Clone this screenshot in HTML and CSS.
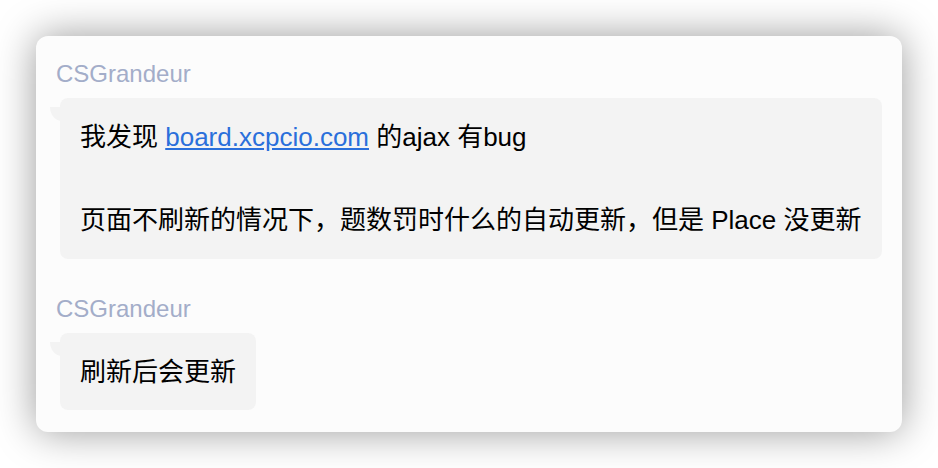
FILE: index.html
```html
<!DOCTYPE html>
<html lang="zh-CN">
  <head>
    <meta charset="utf-8" />
    <meta name="viewport" content="width=device-width, initial-scale=1.0" />
    <title>Chat</title>
    <link rel="stylesheet" href="styles.css">
  </head>
  <body>
    <div class="chat-card">
      <div class="msg">
        <div class="msg-name">CSGrandeur</div>
        <div class="bubble">
          <p>我发现 <a href="#">board.xcpcio.com</a> 的ajax 有bug</p>
          <p>页面不刷新的情况下，题数罚时什么的自动更新，但是 Place 没更新</p>
        </div>
      </div>
      <div class="msg">
        <div class="msg-name">CSGrandeur</div>
        <div class="bubble">
          <p>刷新后会更新</p>
        </div>
      </div>
    </div>
  </body>
</html>
```

FILE: styles.css
```css
:root {
  --card-bg: #fcfcfc;
  --bubble-bg: #f3f3f3;
  --name-color: #a3adc9;
  --link-color: #2a6fdb;
}

* {
  box-sizing: border-box;
}

body {
  margin: 0;
  background-color: #ffffff;
  font-family: "Liberation Sans", Arial, "Noto Sans CJK SC", sans-serif;
  color: #000000;
}

.chat-card {
  margin: 36px;
  padding: 22px 20px 22px;
  background-color: var(--card-bg);
  border-radius: 12px;
  box-shadow: 0 0 40px rgba(0, 0, 0, 0.4);
}

.msg + .msg {
  margin-top: 34px;
}

.msg-name {
  font-size: 24px;
  line-height: 32px;
  color: var(--name-color);
  margin-bottom: 8px;
}

.bubble {
  position: relative;
  width: fit-content;
  margin-left: 4px;
  padding: 19px 20px 17px;
  background-color: var(--bubble-bg);
  border-radius: 8px;
  font-size: 26px;
  line-height: 1.6;
}

/* little tail on the top left */
.bubble::before {
  content: "";
  position: absolute;
  left: -10px;
  top: 9px;
  width: 12px;
  height: 14px;
  background-color: var(--bubble-bg);
  border-bottom-left-radius: 100% 100%;
}

.bubble p {
  margin: 0;
  white-space: nowrap;
}

.bubble p + p {
  margin-top: 41.6px;
}

.bubble a {
  color: var(--link-color);
  text-decoration: underline;
}
```
